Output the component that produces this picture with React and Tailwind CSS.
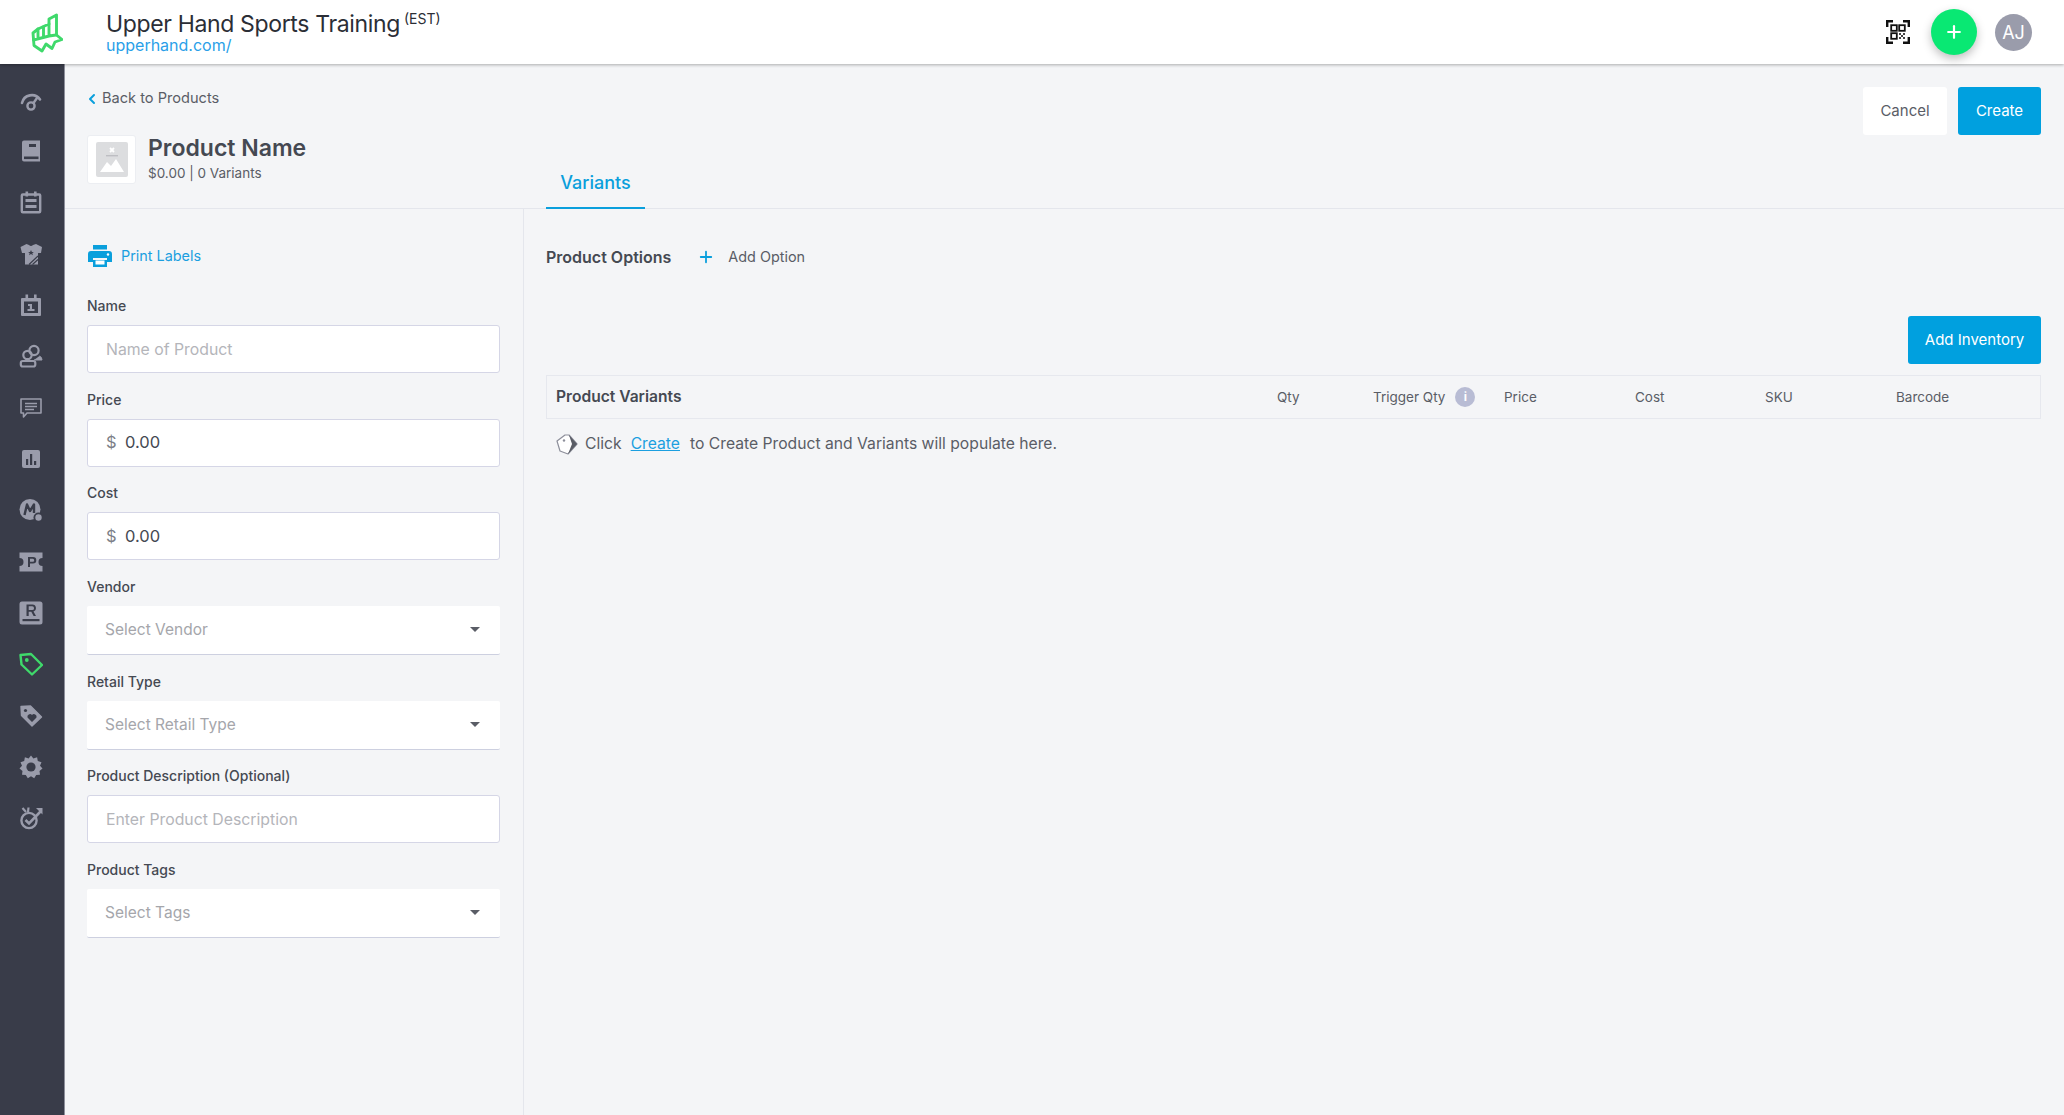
import { Plus, ChevronLeft } from "lucide-react";

const F = "font-['Inter','Liberation_Sans',sans-serif]";

function Logo() {
  return (
    <svg width="32" height="40" viewBox="10 8 32 40" fill="none" stroke="#3fd96b" strokeWidth="2.9" strokeLinejoin="round" strokeLinecap="round">
      <path d="M28 14 L35.5 10 V30 L41 34.5 L34 37 L31 43.5 L25 39 L21 46 L13 40.5 L12 28 L17 24 L28 19 Z" />
      <path d="M17 24 V33 M22.5 22 V31 M28 19 V31 M12.5 35 L28 31 L35 30" />
    </svg>
  );
}

// sidebar icons, drawn on a 24 box
const gray = "#9a9cab";
const dark = "#393c49";

const icons = [
  <g key="gauge">
    <path d="M3 15 A10 10 0 0 1 21 11.5" fill="none" stroke={gray} strokeWidth="2.6" strokeLinecap="round" />
    <circle cx="12" cy="18" r="3.6" fill="none" stroke={gray} strokeWidth="2.4" />
    <path d="M14.5 15 L18 10" stroke={gray} strokeWidth="2.4" strokeLinecap="round" />
  </g>,
  <g key="book">
    <path d="M3 3.5 a2 2 0 0 1 2-2 H21 V22.5 H5 a2 2 0 0 1-2-2 Z" fill={gray} />
    <rect x="10" y="5" width="7" height="3" fill={dark} />
    <rect x="5" y="17.5" width="14.5" height="2.6" fill={dark} />
  </g>,
  <g key="cal">
    <rect x="2.8" y="4.5" width="18.4" height="17.7" rx="1" fill="none" stroke={gray} strokeWidth="2.4" />
    <rect x="6.5" y="1.5" width="2.6" height="5" fill={gray} />
    <rect x="15" y="1.5" width="2.6" height="5" fill={gray} />
    <rect x="6.5" y="9" width="11" height="3" fill={gray} />
    <rect x="6.5" y="15" width="11" height="3" fill={gray} />
  </g>,
  <g key="shirt">
    <path d="M7.5 2 L10 3 Q12 5 14 3 L17 2 L23 5 L22 11 L19 11 V22.5 H6 V11 L3 11 L1.5 5 Z" fill={gray} />
    <path d="M12 8 l.9 2 2 .1-1.6 1.2.6 2-1.9-1.2-1.9 1.2.6-2-1.6-1.2 2-.1Z" fill={dark} />
    <path d="M10 22.5 L19 14 M13.5 22.5 L19 17.5" stroke={dark} strokeWidth="1.1" />
  </g>,
  <g key="cal1">
    <path d="M3 5 H21 a1 1 0 0 1 1 1 V22 a1 1 0 0 1-1 1 H3 a1 1 0 0 1-1-1 V6 a1 1 0 0 1 1-1 Z" fill={gray} />
    <rect x="5" y="8.5" width="14" height="11.5" fill={dark} />
    <rect x="6.5" y="1.5" width="2.6" height="5" fill={gray} />
    <rect x="15" y="1.5" width="2.6" height="5" fill={gray} />
    <path d="M9 11 H13 V16 H15.5 V18 H8.5 V16 H10.8 V13 H9 Z" fill={gray} />
  </g>,
  <g key="people">
    <circle cx="15" cy="6.5" r="4.6" fill="none" stroke={gray} strokeWidth="2.2" />
    <path d="M20.5 12 Q23 13 23 16 H15" fill={gray} stroke={gray} strokeWidth="1" />
    <circle cx="8.5" cy="11" r="4.2" fill="none" stroke={gray} strokeWidth="2.2" />
    <rect x="1.8" y="17" width="14.5" height="5.5" rx="2" fill="none" stroke={gray} strokeWidth="2.2" />
  </g>,
  <g key="chat">
    <path d="M2 3 H22 V17 H8 L4.5 21 V17 H2 Z" fill="none" stroke={gray} strokeWidth="1.6" strokeLinejoin="round" />
    <path d="M6 7.5 H18 M6 10.5 H18 M6 13.5 H15" stroke={gray} strokeWidth="1.4" />
  </g>,
  <g key="bars">
    <rect x="3" y="3" width="18" height="18" rx="2" fill={gray} />
    <rect x="7" y="12" width="2.2" height="6" fill={dark} />
    <rect x="11" y="7" width="2.2" height="11" fill={dark} />
    <rect x="15" y="14" width="2.2" height="4" fill={dark} />
  </g>,
  <g key="m">
    <circle cx="11" cy="11.5" r="10.5" fill={gray} />
    <circle cx="19.5" cy="19.5" r="5" fill={dark} />
    <circle cx="19.5" cy="19.5" r="3.2" fill={gray} />
    <path d="M5.5 17 L8 6.5 L11 13 L15 6.5 L15 15" fill="none" stroke={dark} strokeWidth="2.4" strokeLinejoin="round" />
  </g>,
  <g key="ticket">
    <path d="M0.5 2.5 H23.5 V8 a3.5 3.5 0 0 0 0 8 V21.5 H0.5 V16 a3.5 3.5 0 0 0 0-8 Z" fill={gray} />
    <path d="M9 7 H14 a3.2 3.2 0 0 1 0 6.6 H11 V17 H9 Z M11 8.8 V11.8 H13.7 a1.5 1.5 0 0 0 0-3 Z" fill={dark} fillRule="evenodd" />
  </g>,
  <g key="r">
    <rect x="0.5" y="0.5" width="23" height="23" rx="2.5" fill={gray} />
    <path d="M7.5 3.5 H13.5 a3.6 3.6 0 0 1 1 7 L17 15 H14.6 L12.3 10.8 H9.7 V15 H7.5 Z M9.7 5.3 V9 H13.2 a1.85 1.85 0 0 0 0-3.7 Z" fill={dark} fillRule="evenodd" />
    <rect x="3.5" y="18" width="17" height="2.2" fill={dark} />
  </g>,
  <g key="tag">
    <path d="M1.5 3 L12 2 L23 13 L13 22.5 L2.5 12.5 Z" fill="none" stroke="#3fd96b" strokeWidth="2.4" strokeLinejoin="round" />
    <circle cx="7.8" cy="8" r="1.9" fill="#3fd96b" />
  </g>,
  <g key="tagheart">
    <path d="M2 2.5 L11.5 2 L22.5 13 L13 22 L2.5 11.5 Z" fill={gray} stroke={gray} strokeWidth="1.4" strokeLinejoin="round" />
    <circle cx="6.5" cy="6.5" r="1.6" fill={dark} />
    <path d="M13 18 L8.5 13.5 a2.6 2.6 0 0 1 4.5-2.4 a2.6 2.6 0 0 1 4.5 2.4 Z" fill={dark} />
  </g>,
  <g key="gear">
    <path d="M12 0.5 L14.4 3.4 L18.1 2.3 L18.8 6.1 L22.5 7.3 L21 10.8 L23.5 13.6 L20.5 16 L21 19.8 L17.2 20 L15.2 23.3 L12 21.2 L8.8 23.3 L6.8 20 L3 19.8 L3.5 16 L0.5 13.6 L3 10.8 L1.5 7.3 L5.2 6.1 L5.9 2.3 L9.6 3.4 Z" fill={gray} />
    <circle cx="12" cy="12" r="4.6" fill={dark} />
  </g>,
  <g key="goal">
    <circle cx="10" cy="14.5" r="7.6" fill="none" stroke={gray} strokeWidth="2.4" />
    <path d="M6.5 14 L10 17.5 L22 5" fill="none" stroke={gray} strokeWidth="2.6" />
    <path d="M17 2 H23.5 V8.5 Z" fill={gray} />
    <path d="M3.5 2 L7 6 M9.5 1.5 L9 6" stroke={gray} strokeWidth="2.2" />
  </g>,
];

function Field({ label, className = "mb-[16.5px]", children }) {
  return (
    <div className={className}>
      <label className="block h-5 mb-[9px] text-[14px] leading-5 font-medium text-[#454952]">{label}</label>
      {children}
    </div>
  );
}

function TextInput({ placeholder }) {
  return (
    <input
      placeholder={placeholder}
      className="block w-full h-12 px-[18px] bg-white border border-[#d5d6e6] rounded-[3px] text-[15.8px] outline-none placeholder:text-[#b4b5ba]"
    />
  );
}

function MoneyInput() {
  return (
    <div className="flex items-center h-12 px-[18px] bg-white border border-[#d5d6e6] rounded-[3px] text-[16.5px]">
      <span className="w-[19px] text-[#7d7f88]">$</span>
      <input defaultValue="0.00" className="w-20 outline-none text-[#454952]" />
    </div>
  );
}

function SelectBox({ placeholder }) {
  return (
    <div className="flex items-center justify-between h-[49px] pl-[18px] pr-[20px] bg-white border-b border-[#cdd0e0] rounded-[2px] text-[15.5px] text-[#a5a6ab]">
      <span>{placeholder}</span>
      <span className="w-0 h-0 border-x-[5px] border-x-transparent border-t-[5px] border-t-[#5a5d66]" />
    </div>
  );
}

export default function App() {
  return (
    <div className={`${F} flex flex-col h-screen overflow-hidden bg-[#f4f5f7] text-[#454952]`}>
      <header className="relative z-10 flex items-center h-16 bg-white shadow-[0_1px_3px_rgba(0,0,0,0.3)]">
        <div className="ml-[31px] mr-[43px] mt-[1px]">
          <Logo />
        </div>
        <div className="flex flex-col mt-[-2px]">
          <div className="text-[23px] leading-[27px] text-[#2b2e36] tracking-[-0.35px]">
            Upper Hand Sports Training
            <sup className="ml-[4px] text-[14px] top-[-0.55em] tracking-normal">(EST)</sup>
          </div>
          <a className="text-[16px] leading-[14px] text-[#2a9fe8]">upperhand.com/</a>
        </div>
        <div className="ml-auto flex items-center mr-[32px]">
          <svg width="24" height="24" viewBox="0 0 24 24" fill="none" className="mr-[21px]">
            <path d="M1.2 7 V1.2 H7 M17 1.2 H22.8 V7 M1.2 17 V22.8 H7 M17 22.8 H22.8 V17" stroke="#111" strokeWidth="2.4" />
            <rect x="5.2" y="5.2" width="5.6" height="5.6" stroke="#111" strokeWidth="1.8" />
            <rect x="13.2" y="5.2" width="5.6" height="5.6" stroke="#111" strokeWidth="1.8" />
            <rect x="5.2" y="13.2" width="5.6" height="5.6" stroke="#111" strokeWidth="1.8" />
            <path d="M13 13 h2 v2 h-2Z M17 13 h2 v2 h-2Z M15 15 h2 v2 h-2Z M13 17 h2 v2 h-2Z M17 17 h2 v2 h-2Z" fill="#444" />
          </svg>
          <div className="flex items-center justify-center w-[46px] h-[46px] rounded-full bg-[#09e873] shadow-[0_4px_10px_rgba(0,0,0,0.25)] mr-[18px]">
            <Plus size={20} color="#fff" strokeWidth={2.6} />
          </div>
          <div className="flex items-center justify-center w-[37px] h-[37px] rounded-full bg-[#9a9cab] text-white text-[18px]">AJ</div>
        </div>
      </header>

      <div className="flex flex-1 min-h-0">
        <nav className="flex flex-col items-center w-[65px] shrink-0 pt-[10px] pr-[3px] bg-[#393c49] border-r border-[#8d8f9b]">
          {icons.map((icon, i) => (
            <div key={i} className="flex items-center justify-center w-full h-[51.35px]">
              <svg width="24" height="24" viewBox="0 0 24 24">{icon}</svg>
            </div>
          ))}
        </nav>

        <main className="flex flex-col flex-1 min-w-0">
          <div className="flex h-[145px] shrink-0 border-b border-[#e4e6ec]">
            <div className="w-[481px] shrink-0 pl-[22px] pt-[24.5px]">
              <div className="flex items-center h-5 text-[14.6px] text-[#5a5d66]">
                <ChevronLeft size={16} color="#0a9fdc" strokeWidth={3} className="ml-[-3px] mr-[2px]" />
                Back to Products
              </div>
              <div className="flex items-start mt-[26.5px]">
                <div className="flex items-center justify-center w-[49px] h-[49px] bg-white border border-[#eceef2] rounded-[3px]">
                  <svg width="32" height="35" viewBox="0 0 32 35">
                    <rect width="32" height="35" rx="2" fill="#dcdddf" />
                    <path d="M14 6 l4 4 M18 6 l-4 4" stroke="#fff" strokeWidth="1.8" />
                    <rect x="10" y="13" width="12" height="1.4" fill="#bdbec2" />
                    <path d="M4 30 L11 20 L15 24 L20 17 L28 30 Z" fill="#fff" />
                  </svg>
                </div>
                <div className="ml-3">
                  <div className="text-[23px] leading-7 font-semibold text-[#454952] mt-[-1px]">Product Name</div>
                  <div className="text-[13.5px] leading-5 mt-[1px] text-[#5a5d66]">$0.00 | 0 Variants</div>
                </div>
              </div>
            </div>
            <div className="self-end flex items-center justify-center w-[99px] h-[50px] pb-[2px] text-[18px] font-medium text-[#0a9fdc] border-b-2 border-[#0a9fdc] mb-[-1px]">
              Variants
            </div>
            <div className="flex ml-auto mt-[23px] mr-[23px] gap-[11px]">
              <button className="w-[84px] h-12 bg-white rounded-[3px] text-[15px] text-[#5a5d66]">Cancel</button>
              <button className="w-[83px] h-12 bg-[#00a0df] rounded-[3px] text-[15px] text-white">Create</button>
            </div>
          </div>

          <div className="flex flex-1 min-h-0">
            <aside className="w-[459px] shrink-0 pl-[22px] pr-[23px] pt-[35px] border-r border-[#e4e6ec]">
              <div className="flex items-center h-6 mb-[28px] text-[14.4px] text-[#1b9fe0]">
                <svg width="24" height="22" viewBox="0 0 24 22" className="mr-[9px] ml-[1px]">
                  <rect x="5" y="0" width="14" height="4.5" fill="#0a9fdc" />
                  <path d="M3 6 H21 a3 3 0 0 1 3 3 V17 H19 V13 H5 V17 H0 V9 a3 3 0 0 1 3-3 Z" fill="#0a9fdc" />
                  <path d="M5 15 H19 V22 H5 Z" fill="#0a9fdc" />
                  <rect x="7.5" y="15.5" width="9" height="4" fill="#fff" />
                  <circle cx="20" cy="9.5" r="1.2" fill="#fff" />
                </svg>
                Print Labels
              </div>
              <Field label="Name"><TextInput placeholder="Name of Product" /></Field>
              <Field label="Price"><MoneyInput /></Field>
              <Field label="Cost"><MoneyInput /></Field>
              <Field label="Vendor" className="mb-[17px]"><SelectBox placeholder="Select Vendor" /></Field>
              <Field label="Retail Type"><SelectBox placeholder="Select Retail Type" /></Field>
              <Field label="Product Description (Optional)"><TextInput placeholder="Enter Product Description" /></Field>
              <Field label="Product Tags"><SelectBox placeholder="Select Tags" /></Field>
            </aside>

            <section className="flex-1 min-w-0 pl-[22px] pr-[23px] pt-[36px]">
              <div className="flex items-center h-6">
                <span className="text-[16px] font-semibold text-[#454952]">Product Options</span>
                <Plus size={18} color="#0a9fdc" strokeWidth={2.4} className="ml-[26px] mr-[13px]" />
                <span className="text-[14.4px] text-[#5a5d66]">Add Option</span>
              </div>
              <div className="flex justify-end mt-[47px]">
                <button className="w-[133px] h-12 bg-[#00a0df] rounded-[3px] text-[15px] text-white">Add Inventory</button>
              </div>
              <div className="flex items-center h-11 mt-[11px] pl-[9px] border border-[#e6e8ee] text-[13.5px] text-[#5a5d66]">
                <span className="w-[721px] shrink-0 text-[15.6px] font-semibold text-[#454952]">Product Variants</span>
                <span className="w-[96px] shrink-0">Qty</span>
                <span className="flex items-center w-[131px] shrink-0">
                  Trigger Qty
                  <span className="flex items-center justify-center w-5 h-5 ml-[10px] rounded-full bg-[#b8bcd4] text-white text-[12px] font-bold">i</span>
                </span>
                <span className="w-[131px] shrink-0">Price</span>
                <span className="w-[130px] shrink-0">Cost</span>
                <span className="w-[131px] shrink-0">SKU</span>
                <span>Barcode</span>
              </div>
              <div className="flex items-center h-[50px] pl-[9px] text-[15.7px] text-[#5a5d66]">
                <svg width="24" height="23" viewBox="0 0 24 23" className="mr-[6px]">
                  <path d="M2 8 L10 2 H14 L22 11 L13 21 L5 18 Z" fill="#fff" stroke="#8d8f9b" strokeWidth="1.2" strokeLinejoin="round" />
                  <path d="M14 2 L22 11 L13 21 L17 11 Z" fill="#5a5d66" />
                  <circle cx="9" cy="7.5" r="1.2" fill="#8d8f9b" />
                </svg>
                Click
                <a className="ml-[9px] mr-[10px] text-[#1b9fe0] underline">Create</a>
                to Create Product and Variants will populate here.
              </div>
            </section>
          </div>
        </main>
      </div>
    </div>
  );
}
